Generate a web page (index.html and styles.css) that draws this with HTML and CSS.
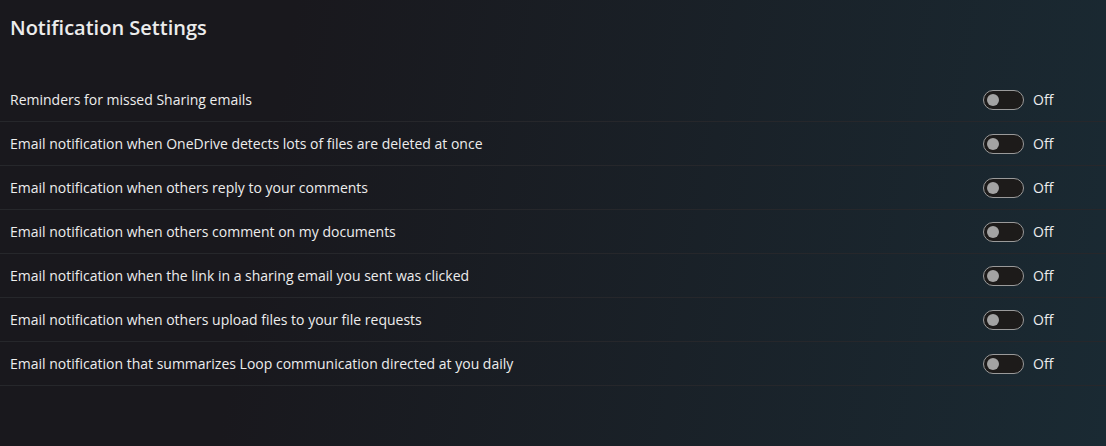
FILE: index.html
```html
<!DOCTYPE html>
<html lang="en">
<head>
<meta charset="utf-8">
<title>Notification Settings</title>
<link rel="stylesheet" href="styles.css">
</head>
<body>
<main class="page">
  <h1 class="title">Notification Settings</h1>
  <ul class="list">
    <li class="row"><span class="label">Reminders for missed Sharing emails</span><span class="toggle"><span class="switch"><span class="knob"></span></span><span class="state">Off</span></span></li>
    <li class="row"><span class="label">Email notification when OneDrive detects lots of files are deleted at once</span><span class="toggle"><span class="switch"><span class="knob"></span></span><span class="state">Off</span></span></li>
    <li class="row"><span class="label">Email notification when others reply to your comments</span><span class="toggle"><span class="switch"><span class="knob"></span></span><span class="state">Off</span></span></li>
    <li class="row"><span class="label">Email notification when others comment on my documents</span><span class="toggle"><span class="switch"><span class="knob"></span></span><span class="state">Off</span></span></li>
    <li class="row"><span class="label">Email notification when the link in a sharing email you sent was clicked</span><span class="toggle"><span class="switch"><span class="knob"></span></span><span class="state">Off</span></span></li>
    <li class="row"><span class="label">Email notification when others upload files to your file requests</span><span class="toggle"><span class="switch"><span class="knob"></span></span><span class="state">Off</span></span></li>
    <li class="row"><span class="label">Email notification that summarizes Loop communication directed at you daily</span><span class="toggle"><span class="switch"><span class="knob"></span></span><span class="state">Off</span></span></li>
  </ul>
</main>
</body>
</html>
```

FILE: styles.css
```css
html, body {
  margin: 0;
  padding: 0;
  height: 100%;
}
body {
  background: linear-gradient(100deg, #19181d 25%, #1a2a33 100%);
  color: #ededed;
  font-family: "Segoe UI", "Open Sans", "Noto Sans", sans-serif;
}
.page {
  padding: 0;
}
.title {
  margin: 0;
  padding: 14px 10px 0 10px;
  height: 78px;
  box-sizing: border-box;
  font-size: 20px;
  font-weight: 600;
  line-height: 28px;
  color: #ececec;
}
.list {
  list-style: none;
  margin: 0;
  padding: 0;
}
.row {
  display: flex;
  align-items: center;
  justify-content: space-between;
  height: 44px;
  padding: 0 10px;
  border-bottom: 1px solid #26272b;
  box-sizing: border-box;
  font-size: 14px;
}
.toggle {
  display: flex;
  align-items: center;
  gap: 9px;
  width: 113px;
}
.switch {
  width: 41px;
  height: 20px;
  box-sizing: border-box;
  border: 1px solid #9a9a9a;
  border-radius: 10px;
  background: #1d1b1a;
  display: flex;
  align-items: center;
  padding-left: 3px;
}
.knob {
  width: 12px;
  height: 12px;
  border-radius: 50%;
  background: #a3a3a3;
}
.state {
  font-size: 14px;
  color: #ededed;
}
```
